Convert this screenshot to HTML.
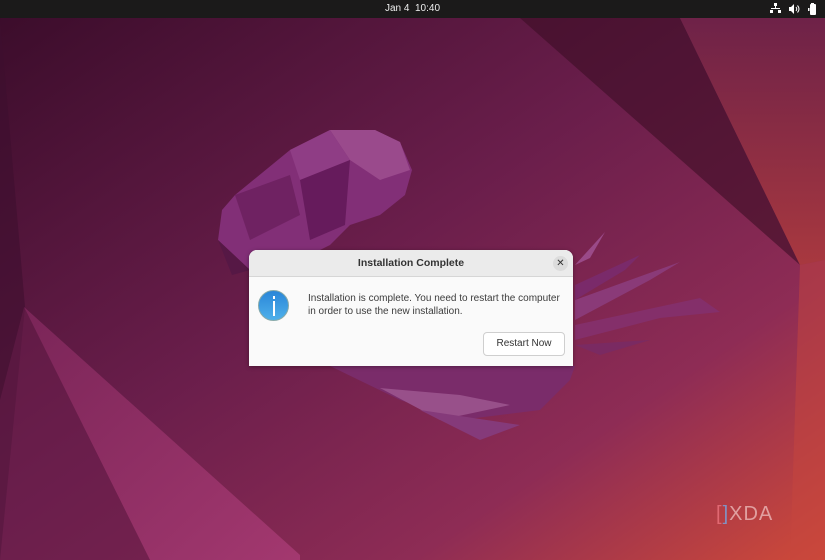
<!DOCTYPE html>
<html><head><meta charset="utf-8"><style>
*{margin:0;padding:0;box-sizing:border-box}
body{width:825px;height:560px;overflow:hidden;position:relative;font-family:"Liberation Sans",sans-serif;background:#5a1a42}
svg.bg{position:absolute;left:0;top:0}
.top{position:absolute;left:0;top:0;width:825px;height:18px;background:#1b1a1a;color:#eee;font-size:10px;text-align:center;line-height:17px}
.dlg{position:absolute;left:249px;top:250px;width:324px;height:116px;background:#fafafa;border-radius:8px 8px 0 0;box-shadow:0 1px 4px rgba(0,0,0,.35);overflow:hidden}
.hd{height:27px;background:#ebebeb;border-bottom:1px solid #d6d6d6;text-align:center;font-weight:bold;font-size:10.5px;color:#333;line-height:27px}
.x{position:absolute;right:5px;top:6px;width:15px;height:15px;border-radius:50%;background:#dcdcdc;font-size:10px;line-height:15px;text-align:center;color:#333}
.ic{position:absolute;left:9px;top:40px;width:31px;height:31px;border-radius:50%;background:linear-gradient(#2a86d8,#4eb0ea);border:1px solid #8aa}
.ic:after{content:"";position:absolute;left:14px;top:10px;width:2px;height:15px;background:#fff}
.ic:before{content:"";position:absolute;left:14px;top:5px;width:2px;height:3px;background:#fff}
.msg{position:absolute;left:59px;top:43px;font-size:10px;line-height:12.5px;color:#3c3c3c}
.btn{position:absolute;left:234px;top:82px;width:82px;height:24px;border:1px solid #cfcfcf;border-radius:4px;background:#fff;font-size:10px;color:#333;text-align:center;line-height:22px}
.xda{position:absolute;left:716px;top:503px;font-size:20px;color:#e8b0b0;letter-spacing:1px;opacity:.85}
</style></head><body>
<svg class="bg" width="825" height="560" viewBox="0 0 825 560">
<defs>
<linearGradient id="g" x1="0" y1="0" x2="1" y2="1">
<stop offset="0" stop-color="#3a0c2a"/><stop offset=".45" stop-color="#6a1e4b"/><stop offset=".75" stop-color="#8e2c55"/><stop offset="1" stop-color="#cf4a38"/></linearGradient>
<linearGradient id="l" x1="0" y1="0" x2="1" y2="1"><stop offset="0" stop-color="#7a2558"/><stop offset="1" stop-color="#a3386f"/></linearGradient>
<linearGradient id="r" x1="0" y1="0" x2="0" y2="1"><stop offset="0" stop-color="#6e2248"/><stop offset="1" stop-color="#a8383f"/></linearGradient>
</defs>
<rect width="825" height="560" fill="url(#g)"/>
<polygon points="0,18 25,307 0,560" fill="#3e0f2e" opacity=".6"/>
<polygon points="24,307 300,555 300,560 150,560" fill="url(#l)"/>
<polygon points="0,400 24,307 150,560 0,560" fill="#6a1e4c" opacity=".5"/>
<polygon points="520,18 680,18 800,265" fill="#3c0e25" opacity=".6"/>
<polygon points="680,18 825,18 825,260 800,265" fill="url(#r)"/>
<polygon points="800,265 825,260 825,560 790,560" fill="#c5463e" opacity=".5"/>
<g>
<polygon points="235,195 290,150 330,130 375,130 400,142 412,170 405,195 380,215 350,225 330,245 300,260 250,270 218,240 222,210" fill="#822f77"/>
<polygon points="330,130 375,130 400,142 410,170 380,180 350,160" fill="#9a4a8c"/>
<polygon points="290,150 330,130 350,160 300,180" fill="#8f3d85"/>
<polygon points="235,195 290,175 300,215 250,240" fill="#6f2262"/>
<polygon points="300,180 350,160 345,225 310,240" fill="#661b5c"/>
<polygon points="218,240 250,270 232,275" fill="#561845"/>
<polygon points="330,366 400,400 460,420 540,410 570,380 575,366" fill="#7a2c6a"/>
<polygon points="380,388 440,420 510,405 460,395" fill="#98508a"/>
<polygon points="420,410 480,440 520,425" fill="#853a7a"/>
<polygon points="575,265 605,232 590,258" fill="#9a4a88"/>
<polygon points="575,285 640,255 625,270 575,300" fill="#7a2a6a"/>
<polygon points="575,300 680,262 650,280 575,320" fill="#8a3a78"/>
<polygon points="575,325 700,298 720,312 660,318 575,340" fill="#842f6a"/>
<polygon points="575,345 650,340 600,355" fill="#7a2a62"/>
</g>
</svg>
<div class="top">Jan 4&nbsp; 10:40
<svg style="position:absolute;right:44px;top:3px" width="11" height="11" viewBox="0 0 11 11" fill="#fff"><rect x="4" y="0" width="3" height="3"/><rect x="5" y="3" width="1" height="3"/><rect x="1" y="5" width="9" height="1"/><rect x="0" y="7" width="3" height="3"/><rect x="8" y="7" width="3" height="3"/></svg>
<svg style="position:absolute;right:25px;top:4px" width="11" height="10" viewBox="0 0 11 10" fill="#fff"><polygon points="0,3 2,3 5,0 5,10 2,7 0,7"/><path d="M7 3q1.5 2 0 4M8.5 1.5q3 3.5 0 7" stroke="#fff" fill="none"/></svg>
<svg style="position:absolute;right:7px;top:3px" width="10" height="12" viewBox="0 0 10 12"><rect x="3" y="0" width="3" height="1" fill="#fff"/><rect x="2" y="1" width="6" height="11" rx="1" fill="#fff"/><rect x="0" y="5" width="1.5" height="3" fill="#fff"/></svg>
</div>
<div class="dlg">
<div class="hd">Installation Complete</div>
<div class="x">✕</div>
<div class="ic"></div>
<div class="msg">Installation is complete. You need to restart the computer<br>in order to use the new installation.</div>
<div class="btn">Restart Now</div>
</div>
<div class="xda"><span style="color:#e9707a">[</span><span style="color:#7aa0d8">]</span>XDA</div>
</body></html>
